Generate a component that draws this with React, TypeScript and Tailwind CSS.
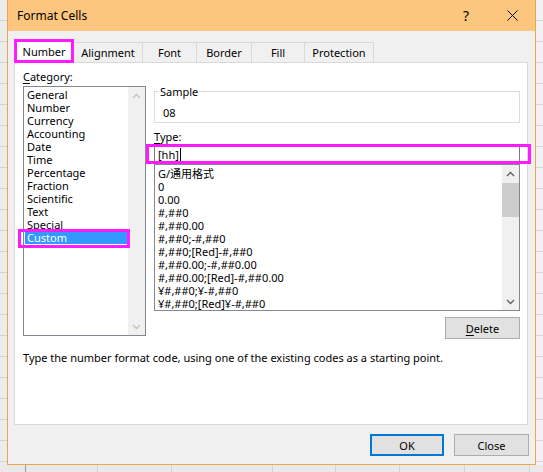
import React from "react";

const categories = [
  "General",
  "Number",
  "Currency",
  "Accounting",
  "Date",
  "Time",
  "Percentage",
  "Fraction",
  "Scientific",
  "Text",
  "Special",
  "Custom",
];

const codes = [
  "G/通用格式",
  "0",
  "0.00",
  "#,##0",
  "#,##0.00",
  "#,##0;-#,##0",
  "#,##0;[Red]-#,##0",
  "#,##0.00;-#,##0.00",
  "#,##0.00;[Red]-#,##0.00",
  "¥#,##0;¥-#,##0",
  "¥#,##0;[Red]¥-#,##0",
];

const tabs = [
  { label: "Number", w: "w-[60px]" },
  { label: "Alignment", w: "w-[69px]" },
  { label: "Font", w: "w-[54px]" },
  { label: "Border", w: "w-[55px]" },
  { label: "Fill", w: "w-[53px]" },
  { label: "Protection", w: "w-[69px]" },
];

function Chevron({ dir, color }: { dir: "up" | "down"; color: string }) {
  return (
    <svg width="9" height="6" viewBox="0 0 9 6">
      <path
        d={dir === "up" ? "M1 5 L4.5 1.5 L8 5" : "M1 1 L4.5 4.5 L8 1"}
        fill="none"
        stroke={color}
        strokeWidth="1.3"
      />
    </svg>
  );
}

function CategoryList() {
  return (
    <div className="mt-[3px] h-[250px] border border-[#828790] bg-white flex">
      <div className="flex-1 pt-[1px]">
        {categories.map((c) =>
          c === "Custom" ? (
            <div key={c} className="relative mx-[1px] h-[13px] pl-[2px] bg-[#3399ff] text-white">
              {c}
              <div className="absolute -left-[7px] -right-[3px] -top-[2px] -bottom-[4px] border-[3px] border-[#ff1aff]" />
            </div>
          ) : (
            <div key={c} className="h-[13px] pl-[3px]">
              {c}
            </div>
          )
        )}
      </div>
      <div className="w-[17px] bg-[#f0f0f0] flex flex-col justify-between">
        <div className="h-[17px] flex items-center justify-center">
          <Chevron dir="up" color="#c2c2c2" />
        </div>
        <div className="h-[17px] flex items-center justify-center">
          <Chevron dir="down" color="#c2c2c2" />
        </div>
      </div>
    </div>
  );
}

function CodeList() {
  return (
    <div className="h-[147px] border border-[#828790] bg-white flex overflow-hidden">
      <div className="flex-1 pt-[2px] pl-[3px]">
        {codes.map((c) => (
          <div key={c} className="h-[13px] whitespace-nowrap">
            {c}
          </div>
        ))}
      </div>
      <div className="w-[17px] bg-[#f0f0f0] flex flex-col">
        <div className="h-[17px] flex items-center justify-center">
          <Chevron dir="up" color="#606060" />
        </div>
        <div className="mt-[1px] h-[34px] bg-[#cdcdcd]" />
        <div className="flex-1" />
        <div className="h-[17px] flex items-center justify-center">
          <Chevron dir="down" color="#606060" />
        </div>
      </div>
    </div>
  );
}

export default function App() {
  return (
    <div className="w-[543px] h-[472px] overflow-hidden flex flex-col bg-[#efefef] text-black text-[11px] leading-[13px] font-['Noto_Sans','Noto_Sans_CJK_SC',sans-serif]">
      <div className="flex h-[465px]">
        <div className="w-[7px] bg-[image:repeating-linear-gradient(to_bottom,#ececec_0px,#ececec_20px,#d3d3d3_20px,#d3d3d3_21px)]" />

        {/* Format Cells dialog */}
        <div className="w-[529px] h-[465px] border-x border-b border-[#e9a54f] bg-[#f0f0f0] flex flex-col">
          <div className="h-[31px] shrink-0 bg-[#fdc67f] flex items-center text-[12px]">
            <span className="flex-1 pl-[9px]">Format Cells</span>
            <div className="w-[46px] h-full flex items-center justify-center text-[14px]">?</div>
            <div className="w-[46px] h-full flex items-center justify-center">
              <svg width="11" height="11" viewBox="0 0 11 11">
                <path d="M0.5 0.5 L10.5 10.5 M10.5 0.5 L0.5 10.5" stroke="#000" strokeWidth="1" />
              </svg>
            </div>
          </div>

          <div className="flex-1 pt-[8px] px-[6px] flex flex-col">
            {/* tab strip */}
            <div className="flex items-end h-[23px]">
              {tabs.map((t, i) =>
                i === 0 ? (
                  <div
                    key={t.label}
                    className={`${t.w} h-[24px] -mb-[1px] relative z-10 bg-white border-[3px] border-[#ff1aff] flex items-center justify-center`}
                  >
                    {t.label}
                  </div>
                ) : (
                  <div
                    key={t.label}
                    className={`${t.w} h-[20px] border-t border-r border-[#d9d9d9] flex items-center justify-center`}
                  >
                    {t.label}
                  </div>
                )
              )}
            </div>

            {/* tab panel */}
            <div className="w-[514px] h-[363px] border border-[#d9d9d9] bg-white pl-[8px] pr-[7px]">
              <div className="flex gap-[8px]">
                <div className="w-[123px] pt-[7px] flex flex-col">
                  <div className="h-[13px]">
                    <span className="underline underline-offset-[2px]">C</span>ategory:
                  </div>
                  <CategoryList />
                </div>

                <div className="w-[366px] pt-[28px] flex flex-col">
                  <div className="relative h-[32px] border border-[#dcdcdc] pl-[8px] pt-[14px]">
                    <span className="absolute -top-[7px] left-[4px] px-[1px] bg-white">Sample</span>
                    08
                  </div>
                  <div className="mt-[7px] h-[13px]">
                    <span className="underline underline-offset-[2px]">T</span>ype:
                  </div>
                  <div className="relative mt-[1px] h-[20px] border border-[#7a7a7a] bg-white pl-[3px] flex items-center">
                    <span>[hh]</span>
                    <span className="ml-[1px] w-px h-[13px] bg-black" />
                    <div className="absolute -left-[9px] -right-[12px] -top-px -bottom-px border-[3px] border-[#ff1aff]" />
                  </div>
                  <CodeList />
                  <div className="mt-[6px] self-end w-[75px] h-[22px] border border-[#adadad] bg-[#e1e1e1] flex items-center justify-center">
                    <span>
                      <span className="underline underline-offset-[2px]">D</span>elete
                    </span>
                  </div>
                </div>
              </div>
              <div className="mt-[12px] h-[13px] whitespace-nowrap">
                Type the number format code, using one of the existing codes as a starting point.
              </div>
            </div>

            {/* footer buttons */}
            <div className="mt-[9px] flex justify-end gap-[10px]">
              <div className="w-[74px] h-[22px] border-2 border-[#0078d7] bg-[#e1e1e1] flex items-center justify-center">
                OK
              </div>
              <div className="w-[75px] h-[22px] border border-[#adadad] bg-[#e1e1e1] flex items-center justify-center">
                Close
              </div>
            </div>
          </div>
        </div>

        <div className="flex-1 bg-[image:repeating-linear-gradient(to_bottom,#f2f2f2_0px,#f2f2f2_20px,#d6d6d6_20px,#d6d6d6_21px)]" />
      </div>

      {/* worksheet cells below the dialog */}
      <div className="h-[7px] flex bg-[#e9e9e9]">
        <div className="w-[25px]" />
        <div className="w-[72px] border-l border-[#9a9a9a]" />
        <div className="w-[74px] border-l border-[#d3d3d3]" />
        <div className="w-[101px] border-l border-[#d3d3d3]" />
        <div className="w-[63px] border-l border-[#d3d3d3]" />
        <div className="w-[64px] border-l border-[#d3d3d3]" />
        <div className="w-[65px] border-l border-[#d3d3d3]" />
        <div className="w-[65px] border-l border-[#d3d3d3]" />
        <div className="flex-1 border-l border-[#d3d3d3]" />
      </div>
    </div>
  );
}
